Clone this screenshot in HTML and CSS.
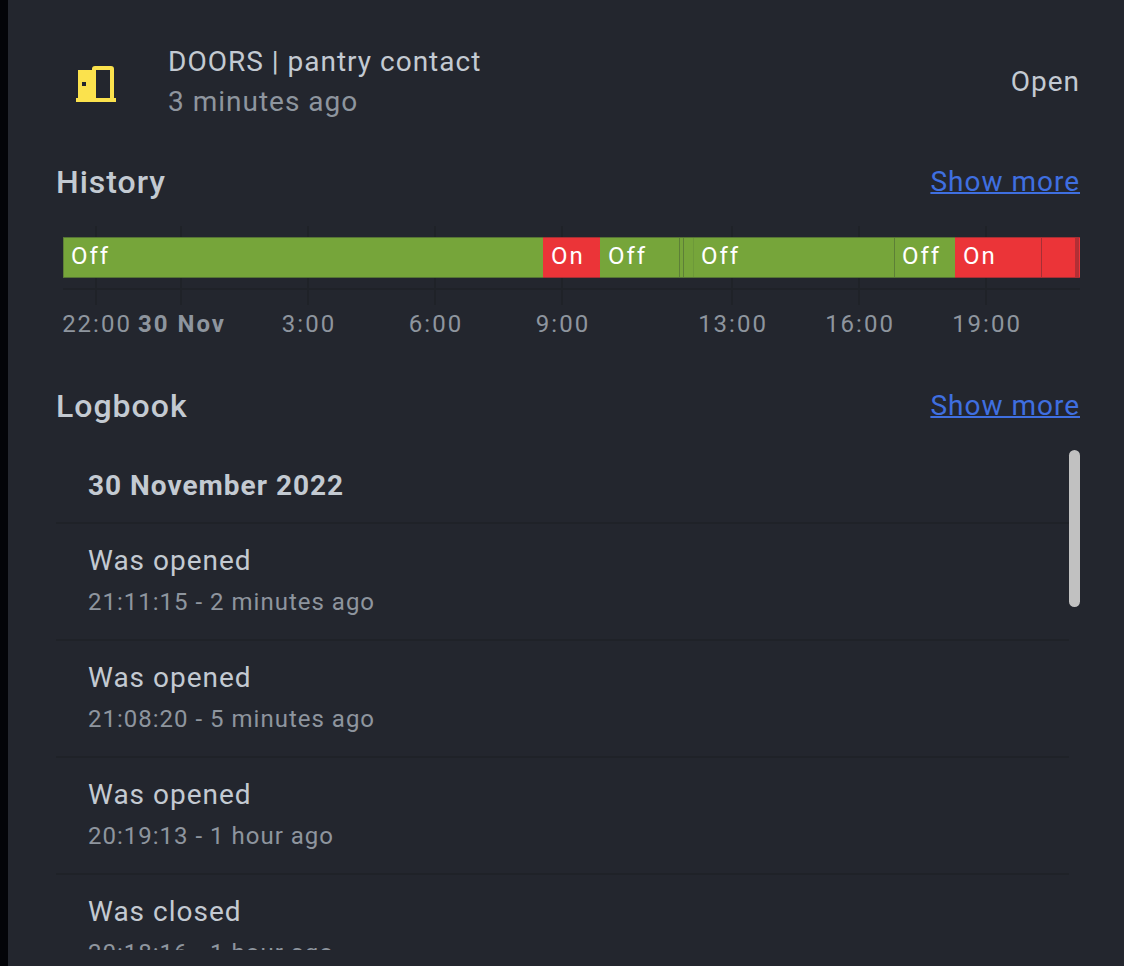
FILE: index.html
```html
<!DOCTYPE html>
<html lang="en">
<head>
<meta charset="utf-8">
<meta name="viewport" content="width=device-width, initial-scale=1">
<title>DOORS | pantry contact</title>
<link rel="stylesheet" href="styles.css">
</head>
<body>
<main class="dialog">
  <header class="entity">
    <svg class="entity-icon" viewBox="0 -1 24 24" aria-hidden="true">
      <path fill-rule="evenodd" d="M3 5H10V4.500A1.500 1.500 0 0 1 11.500 3H19.500A1.500 1.500 0 0 1 21 4.500V19H22V21H2V19H3ZM12 5V19H19V5ZM5 11V13H7V11Z"/>
    </svg>
    <div class="entity-info">
      <div class="entity-name">DOORS | pantry contact</div>
      <div class="secondary">3 minutes ago</div>
    </div>
    <div class="entity-state">Open</div>
  </header>

  <section class="history">
    <div class="section-head">
      <h2>History</h2>
      <a href="#history">Show more</a>
    </div>
    <div class="chart">
      <ol class="ticks">
        <li style="flex-grow:34"><span>22:00</span></li>
        <li style="flex-grow:85"><span><b>30 Nov</b></span></li>
        <li style="flex-grow:127"><span>3:00</span></li>
        <li style="flex-grow:127"><span>6:00</span></li>
        <li style="flex-grow:127"><span>9:00</span></li>
        <li style="flex-grow:170"><span>13:00</span></li>
        <li style="flex-grow:127"><span>16:00</span></li>
        <li style="flex-grow:127"><span>19:00</span></li>
        <li class="rest" style="flex-grow:93"></li>
      </ol>
      <div class="timeline">
        <div class="off mark" style="flex-grow:480">Off</div>
        <div class="on" style="flex-grow:57">On</div>
        <div class="off" style="flex-grow:79">Off</div>
        <div class="off mark" style="flex-grow:4"></div>
        <div class="off mark" style="flex-grow:10"></div>
        <div class="off faint" style="flex-grow:201">Off</div>
        <div class="off mark" style="flex-grow:61">Off</div>
        <div class="on" style="flex-grow:86">On</div>
        <div class="on mark" style="flex-grow:34"></div>
        <div class="on dim" style="flex-grow:4"></div>
        <div class="on" style="flex-grow:1"></div>
      </div>
    </div>
  </section>

  <section class="logbook">
    <div class="section-head">
      <h2>Logbook</h2>
      <a href="#logbook">Show more</a>
    </div>
    <div class="log-frame">
      <div class="log">
        <h3>30 November 2022</h3>
        <ul>
          <li><div class="event">Was opened</div><div class="when">21:11:15 - 2 minutes ago</div></li>
          <li><div class="event">Was opened</div><div class="when">21:08:20 - 5 minutes ago</div></li>
          <li><div class="event">Was opened</div><div class="when">20:19:13 - 1 hour ago</div></li>
          <li><div class="event">Was closed</div><div class="when">20:18:16 - 1 hour ago</div></li>
        </ul>
      </div>
      <div class="scroll-thumb"></div>
    </div>
  </section>
</main>
</body>
</html>
```

FILE: styles.css
```css
* {
  box-sizing: border-box;
}

body {
  margin: 0;
  background: #23262e;
  color: #c3cad2;
  font-family: Roboto, "Liberation Sans", sans-serif;
  font-size: 28px;
  line-height: 40px;
  letter-spacing: 1px;
}

h2, h3, ul, ol {
  margin: 0;
  padding: 0;
  list-style: none;
}

.dialog {
  display: flex;
  flex-direction: column;
  height: 100vh;
  padding: 42px 44px 16px 48px;
  border-left: 8px solid #030408;
}

.entity {
  display: flex;
  align-items: center;
  padding-left: 16px;
}

.entity-icon {
  width: 48px;
  height: 48px;
  margin-right: 48px;
  fill: #fbe24d;
}

.entity-info {
  flex: 1;
}

.secondary {
  color: #8e959e;
}

.section-head {
  display: flex;
  justify-content: space-between;
  margin: 40px 0 24px;
}

h2 {
  font-size: 32px;
  font-weight: 500;
}

a {
  color: #3f6fe0;
  text-decoration-thickness: 2px;
}

.chart {
  display: grid;
  padding-left: 7px;
  font-size: 24px;
  letter-spacing: 2px;
}

.ticks,
.timeline {
  grid-area: 1 / 1;
  display: flex;
}

.ticks {
  height: 112px;
  color: #8e959e;
  line-height: 28px;
  background: linear-gradient(#1f2228, #1f2228) 0 62px / 100% 2px no-repeat;
}

.ticks li {
  display: flex;
  flex-basis: 0;
  justify-content: flex-end;
  align-items: flex-end;
  min-width: 0;
  background: linear-gradient(#1f2228, #1f2228) 100% 0 / 2px 79px no-repeat;
}

.ticks .rest {
  background: none;
}

.ticks span {
  display: flex;
  justify-content: center;
  width: 0;
  white-space: nowrap;
}

.timeline {
  height: 41px;
  margin-top: 11px;
  color: #fff;
  line-height: 36px;
}

.timeline div {
  flex-basis: 0;
  min-width: 0;
  text-indent: 8px;
  white-space: nowrap;
  border: solid;
  border-width: 1px 0;
}

.timeline .off {
  background: #76a53a;
  border-color: #557435;
}

.timeline .on {
  background: #eb3438;
  border-color: #a52f35;
}

.timeline .mark {
  box-shadow: inset 1px 0 #5d7f37;
}

.timeline .on.mark {
  box-shadow: inset 1px 0 #a52f35;
}

.timeline .faint {
  box-shadow: inset 1px 0 #6d9939;
}

.timeline .dim {
  background: #b22f35;
}

.logbook {
  display: flex;
  flex: 1;
  flex-direction: column;
  min-height: 0;
}

.logbook .section-head {
  margin-top: 48px;
}

.log-frame {
  position: relative;
  flex: 1;
  min-height: 0;
}

.log {
  height: 100%;
  margin-right: 11px;
  overflow-y: auto;
  scrollbar-width: none;
}

h3 {
  padding: 16px 32px;
  font-size: 28px;
  font-weight: 700;
}

.log li {
  padding: 16px 32px 17px;
  border-top: 2px solid #1f2228;
}

.event {
  line-height: 42px;
}

.when {
  color: #8e959e;
  font-size: 24px;
}

.scroll-thumb {
  position: absolute;
  top: 0;
  right: 0;
  width: 11px;
  height: 157px;
  border-radius: 6px;
  background: #c1c1c1;
}
```
